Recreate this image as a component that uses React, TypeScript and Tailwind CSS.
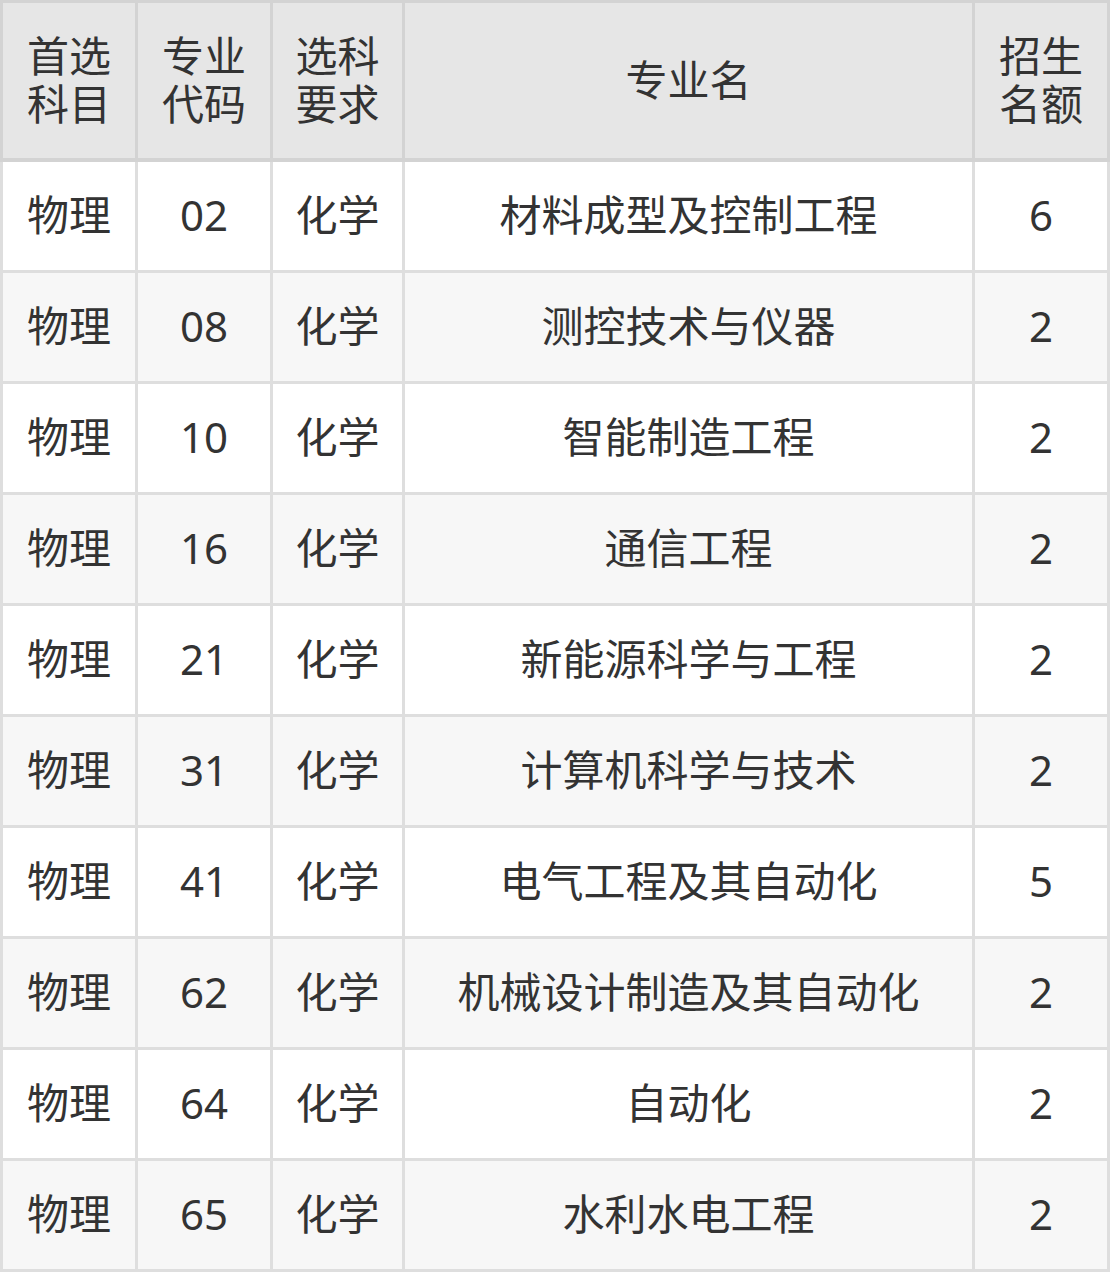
import React from 'react'

const cols = 'grid grid-cols-[132px_132px_129px_567px_132px] gap-x-[3px]'

const rows: [string, string, string, string, string][] = [
    ['物理', '02', '化学', '材料成型及控制工程', '6'],
    ['物理', '08', '化学', '测控技术与仪器', '2'],
    ['物理', '10', '化学', '智能制造工程', '2'],
    ['物理', '16', '化学', '通信工程', '2'],
    ['物理', '21', '化学', '新能源科学与工程', '2'],
    ['物理', '31', '化学', '计算机科学与技术', '2'],
    ['物理', '41', '化学', '电气工程及其自动化', '5'],
    ['物理', '62', '化学', '机械设计制造及其自动化', '2'],
    ['物理', '64', '化学', '自动化', '2'],
    ['物理', '65', '化学', '水利水电工程', '2'],
]

const headers = [
    ['首选', '科目'],
    ['专业', '代码'],
    ['选科', '要求'],
    ['专业名'],
    ['招生', '名额'],
]

export default function App() {
    return (
        <div
            className="w-[1110px] h-[1272px] text-[#333333] text-[42px]"
            style={{ fontFamily: '"Noto Sans", "Noto Sans CJK SC", sans-serif' }}
        >
            {/* header */}
            <div className={`${cols} bg-[#d3d3d3] pt-[3px] pb-[4px] px-[3px]`}>
                {headers.map((lines, i) => (
                    <div key={i} className="h-[155px] bg-[#e6e6e6] flex items-center justify-center text-center leading-[48px] pb-[2px]">
                        <p>
                            {lines.map((l, li) => (
                                <React.Fragment key={l}>
                                    {li > 0 && <br />}
                                    {l}
                                </React.Fragment>
                            ))}
                        </p>
                    </div>
                ))}
            </div>

            {/* body */}
            <div className={`${cols} gap-y-[3px] bg-[#dedede] px-[3px] pb-[3px]`}>
                {rows.map((r, ri) =>
                    r.map((c, ci) => (
                        <div
                            key={`${ri}-${ci}`}
                            className={`h-[108px] pb-[4px] flex items-center justify-center ${ri % 2 === 1 ? 'bg-[#f7f7f7]' : 'bg-white'}`}
                        >
                            {c}
                        </div>
                    ))
                )}
            </div>
        </div>
    )
}
